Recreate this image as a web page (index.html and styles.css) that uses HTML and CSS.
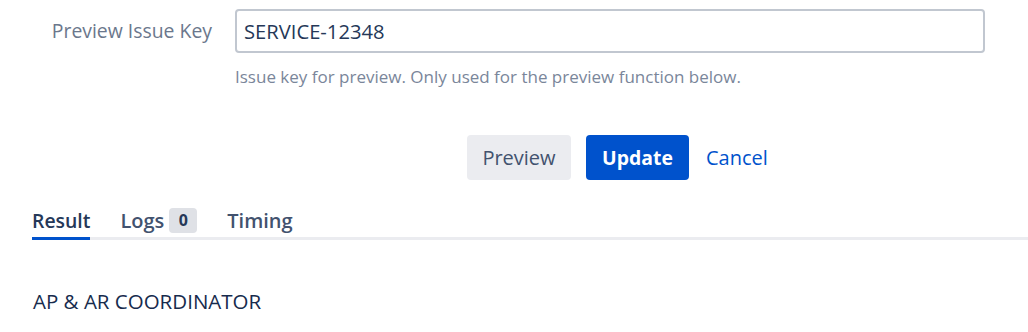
FILE: index.html
```html
<!DOCTYPE html>
<html>
<head>
<meta charset="utf-8">
<link rel="stylesheet" href="styles.css">
</head>
<body>
<div class="page">
  <div class="field">
    <label class="field-label" for="key">Preview Issue Key</label>
    <div class="field-body">
      <input id="key" class="text-input" type="text" value="SERVICE-12348">
      <div class="help">Issue key for preview. Only used for the preview function below.</div>
    </div>
  </div>
  <div class="actions">
    <button class="btn btn-default">Preview</button>
    <button class="btn btn-primary">Update</button>
    <a class="btn-link" href="#">Cancel</a>
  </div>
  <div class="tabs">
    <div class="tab tab-active">Result</div>
    <div class="tab">Logs <span class="badge">0</span></div>
    <div class="tab">Timing</div>
  </div>
  <div class="result">AP &amp; AR COORDINATOR</div>
</div>
</body>
</html>
```
FILE: styles.css
```css
* { box-sizing: border-box; }
body {
  margin: 0;
  background: #fff;
  font-family: "Open Sans", "Noto Sans", sans-serif;
  color: #172b4d;
}
.page { width: 1028px; height: 332px; overflow: hidden; }
.field {
  display: flex;
  align-items: flex-start;
  padding-top: 9px;
}
.field-label {
  width: 212px;
  text-align: right;
  font-size: 19.4px;
  color: #6b778c;
  line-height: 44px;
  flex: none;
}
.field-body { margin-left: 23px; }
.text-input {
  display: block;
  width: 750px;
  height: 44px;
  border: 2px solid #c1c7d0;
  border-radius: 4px;
  padding: 0 7px;
  font-family: inherit;
  font-size: 20.2px;
  color: #253858;
  outline: none;
  background: #fff;
}
.help {
  margin-top: 12px;
  font-size: 17px;
  color: #7a869a;
  line-height: 24px;
}
.actions {
  display: flex;
  align-items: center;
  margin-top: 46px;
  margin-left: 467px;
}
.btn {
  height: 45px;
  border: none;
  border-radius: 4px;
  font-family: inherit;
  padding: 0;
  cursor: pointer;
}
.btn-default { background: #ebecf0; color: #42526e; width: 104px; font-size: 20px; }
.btn-primary { background: #0052cc; color: #fff; font-weight: 700; width: 103px; margin-left: 15px; font-size: 19.4px; }
.btn-link {
  margin-left: 17px;
  color: #0052cc;
  text-decoration: none;
  font-size: 20px;
}
.tabs {
  display: flex;
  gap: 30px;
  margin-top: 23px;
  margin-left: 32px;
  border-bottom: 3px solid #ebecf0;
}
.tab {
  display: flex;
  align-items: center;
  height: 34px;
  font-size: 20px;
  font-weight: 600;
  color: #42526e;
  position: relative;
}
.tab-active { color: #253858; font-size: 19.4px; }
.tab-active::after {
  content: "";
  position: absolute;
  left: 0; right: 0; bottom: -3px;
  height: 3px;
  background: #0052cc;
}
.badge {
  display: inline-flex;
  align-items: center;
  justify-content: center;
  width: 28px;
  height: 25px;
  margin-left: 5px;
  background: #dfe1e6;
  border-radius: 4px;
  font-size: 16px;
  font-weight: 700;
  color: #253858;
}
.result {
  margin-top: 47px;
  margin-left: 33px;
  font-size: 20.5px;
  line-height: 28px;
  color: #172b4d;
}
```
